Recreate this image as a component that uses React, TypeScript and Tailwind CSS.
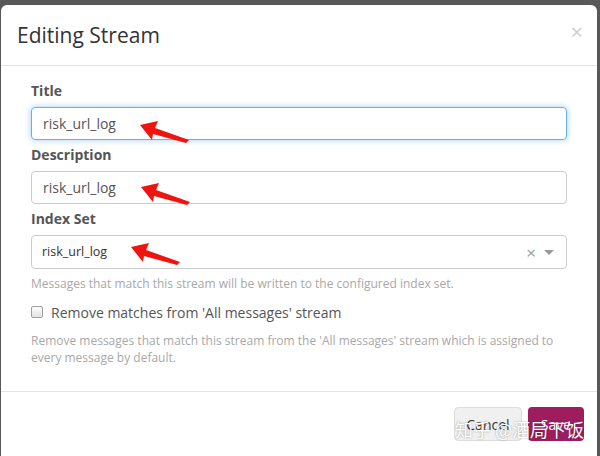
import React from "react";

const font = { fontFamily: '"Open Sans", "Noto Sans", Arial, sans-serif' };

function Arrow({ dx, dy }: { dx: number; dy: number }) {
  return (
    <polygon
      transform={`translate(${dx} ${dy})`}
      points="140,125 158,121 155,128 189,140 186,143 153,134 152,140"
      fill="#f0140f"
    />
  );
}

export default function App() {
  return (
    <div
      className="relative w-[600px] h-[456px] overflow-hidden bg-[#585858] pt-[5px] pl-[1px]"
      style={font}
    >
      <div className="w-[596px] h-[470px] bg-white rounded-[6px] flex flex-col">
        {/* Header */}
        <div className="h-[61px] border-b border-[#e5e5e5] flex items-start justify-between pl-[16px] pr-[14px]">
          <h4 className="text-[21px] leading-[30px] text-[#333] mt-[15px]">Editing Stream</h4>
          <span className="text-[22px] leading-[20px] text-[#cfcfcf] mt-[16px]">×</span>
        </div>
        {/* Body */}
        <div className="px-[30px] pt-[15px] pb-[25px] flex flex-col">
          <label className="text-[14px] leading-[20px] font-bold text-[#555] mb-[6px]">Title</label>
          <div className="h-[33px] border border-[#66afe9] rounded-[4px] shadow-[0_0_6px_rgba(102,175,233,0.6)] flex items-center px-[11px] text-[14px] text-[#555]">
            risk_url_log
          </div>
          <label className="mt-[5px] text-[14px] leading-[20px] font-bold text-[#555] mb-[6px]">Description</label>
          <div className="h-[33px] border border-[#ccc] rounded-[4px] flex items-center px-[11px] text-[14px] text-[#555]">
            risk_url_log
          </div>
          <label className="mt-[5px] text-[14px] leading-[20px] font-bold text-[#555] mb-[6px]">Index Set</label>
          <div className="h-[34px] border border-[#ccc] rounded-[4px] flex items-center pl-[10px] pr-[12px] text-[12.5px] text-[#333]">
            <span className="flex-1">risk_url_log</span>
            <span className="text-[17px] leading-none text-[#999] mr-[8px]">×</span>
            <span className="w-0 h-0 border-l-[5px] border-r-[5px] border-t-[5px] border-l-transparent border-r-transparent border-t-[#999]" />
          </div>
          <p className="mt-[6px] text-[12px] leading-[17px] text-[#a8a8a8]">
            Messages that match this stream will be written to the configured index set.
          </p>
          <div className="mt-[10px] flex items-center h-[20px]">
            <span className="w-[12px] h-[12px] border border-[#a0a0a0] rounded-[2px] bg-gradient-to-b from-[#fcfcfc] to-[#e4e4e4]" />
            <span className="ml-[8px] text-[14px] text-[#555]">Remove matches from 'All messages' stream</span>
          </div>
          <p className="mt-[10px] text-[12px] leading-[17px] text-[#a8a8a8] pr-[10px]">
            Remove messages that match this stream from the 'All messages' stream which is assigned to every message by default.
          </p>
        </div>
        {/* Footer */}
        <div className="border-t border-[#e5e5e5] pt-[15px] pr-[13px] flex justify-end gap-[6px]">
          <button className="h-[34px] w-[68px] border border-[#ddd] bg-[#f0f0f0] rounded-[4px] text-[14px] text-[#333]">
            Cancel
          </button>
          <button className="h-[34px] w-[56px] bg-[#9d1d5f] rounded-[4px] text-[14px] text-white">
            Save
          </button>
        </div>
      </div>

      {/* annotation arrows */}
      <svg className="absolute inset-0 pointer-events-none" width="600" height="456">
        <Arrow dx={0} dy={0} />
        <Arrow dx={1} dy={62} />
        <Arrow dx={-9} dy={122} />
      </svg>

      {/* watermark */}
      <div
        className="absolute left-[455px] top-[417px] text-[18px] leading-[24px] text-white whitespace-nowrap [text-shadow:0_0_2px_rgba(0,0,0,0.4)]"
        style={{ fontFamily: '"Noto Sans CJK SC", "Noto Sans", sans-serif' }}
      >
        知乎 @酒局下饭
      </div>
    </div>
  );
}
